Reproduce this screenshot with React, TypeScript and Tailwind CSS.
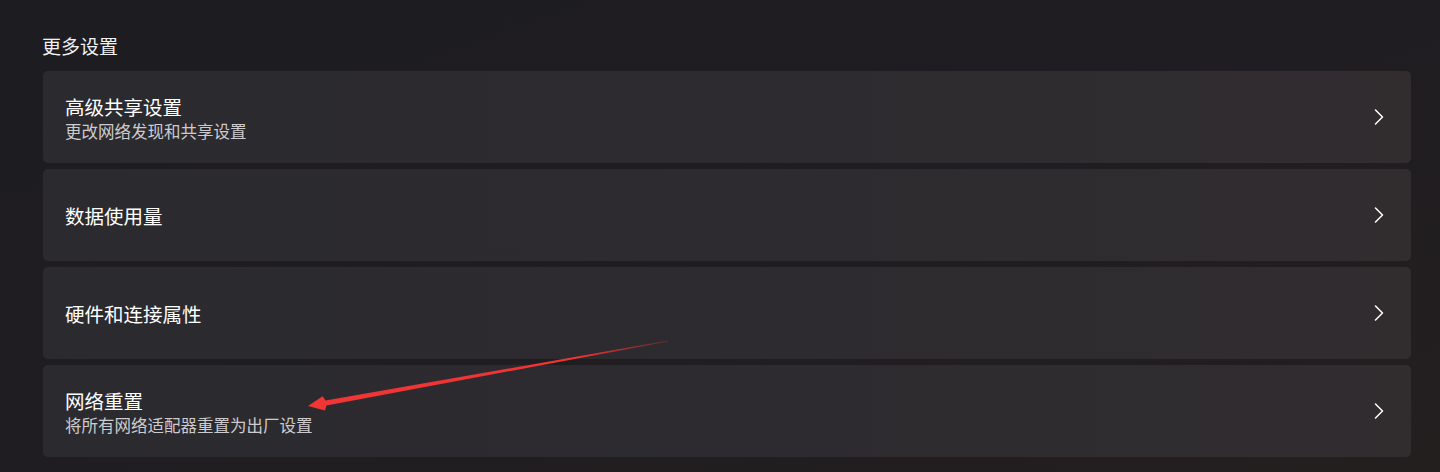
type Row = { title: string; desc?: string };

const rows: Row[] = [
  { title: "高级共享设置", desc: "更改网络发现和共享设置" },
  { title: "数据使用量" },
  { title: "硬件和连接属性" },
  { title: "网络重置", desc: "将所有网络适配器重置为出厂设置" },
];

function Chevron() {
  return (
    <svg width="10" height="16" viewBox="0 0 10 16" fill="none">
      <path d="M1.5 1L8.5 8L1.5 15" stroke="#ffffff" strokeWidth="1.5" strokeLinecap="round" strokeLinejoin="round" />
    </svg>
  );
}

export default function App() {
  return (
    <div
      className="relative w-[1440px] h-[472px] overflow-hidden bg-gradient-to-br from-[#1d1c20] via-[#1f1d21] to-[#241f1f] pl-[43px] pr-[29px] pt-[33px] text-white"
      style={{ fontFamily: '"Noto Sans CJK SC", "Noto Sans", sans-serif' }}
    >
      <h2 className="text-[19px] leading-[26px] text-[#f2f2f2] -ml-px">更多设置</h2>

      <div className="mt-[12px] flex flex-col gap-[6px]">
        {rows.map((r) => (
          <div
            key={r.title}
            className="h-[92px] rounded-[5px] bg-gradient-to-r from-[#2b2a2f] via-[#2d2b30] to-[#312d2f] flex items-center pl-[22px] pr-[27px]"
          >
            <div className="flex-1 flex flex-col gap-[2px]">
              <span className="text-[19.5px] leading-[25px] text-white">{r.title}</span>
              {r.desc && (
                <span className="text-[16.5px] leading-[20px] text-[#cdcbcd]">{r.desc}</span>
              )}
            </div>
            <Chevron />
          </div>
        ))}
      </div>

      <svg
        className="absolute left-0 top-0 pointer-events-none"
        width="1440"
        height="472"
        viewBox="0 0 1440 472"
      >
        <defs>
          <linearGradient id="ar" x1="308" y1="406" x2="668" y2="341" gradientUnits="userSpaceOnUse">
            <stop offset="0" stopColor="#f23535" />
            <stop offset="0.75" stopColor="#ee3434" />
            <stop offset="1" stopColor="#e03030" stopOpacity="0.3" />
          </linearGradient>
        </defs>
        <polygon
          points="308,406 322.6,396.3 325.6,400.6 668,340.6 668,341.4 326.4,405.5 325,410.5"
          fill="url(#ar)"
        />
      </svg>
    </div>
  );
}
